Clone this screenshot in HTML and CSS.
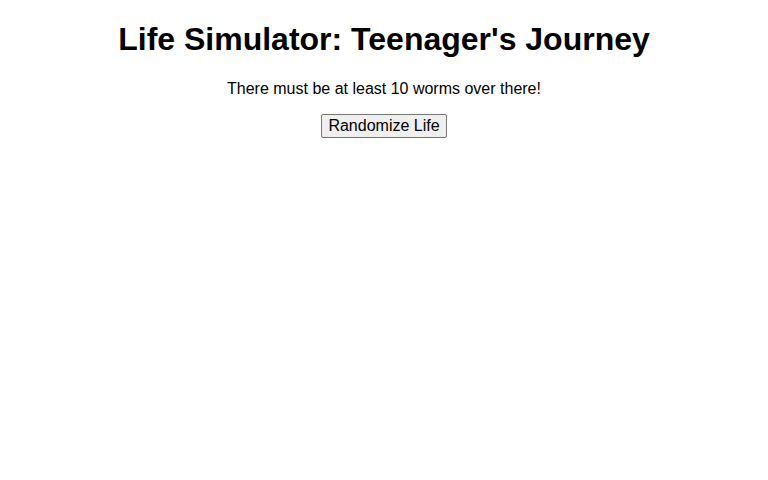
FILE: index.html
```html
<!DOCTYPE html>
<html lang="en">
<head>
<meta charset="utf-8">
<title>Life Simulator: Teenager's Journey</title>
<link rel="stylesheet" href="styles.css">
</head>
<body>
<main class="app">
  <h1 class="title">Life Simulator: Teenager's Journey</h1>
  <p class="message">There must be at least 10 worms over there!</p>
  <div class="actions">
    <button class="btn" type="button">Randomize Life</button>
  </div>
</main>
</body>
</html>
```

FILE: styles.css
```css
body {
  margin: 0 8px 8px;
  font-family: "Liberation Sans", Arial, sans-serif;
  color: #000;
  background: #fff;
}

.app {
  text-align: center;
}

.title {
  font-size: 32px;
  font-weight: bold;
  margin: 21.44px 0;
}

.message {
  font-size: 16px;
  margin: 16px 0;
}

.actions {
  margin: 16px 0;
}

.btn {
  font-family: "Liberation Sans", Arial, sans-serif;
  font-size: 16px;
  line-height: 18px;
  padding: 2px 6px;
  border: 1px solid #767676;
  border-radius: 2px;
  background: #efefef;
  color: #000;
}
```
